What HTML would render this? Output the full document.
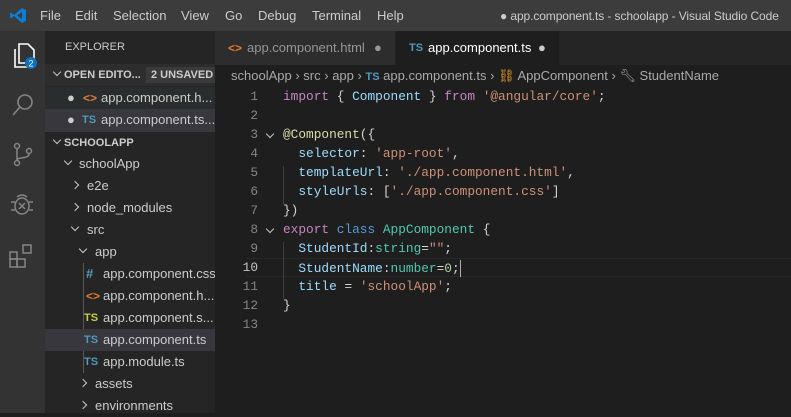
<!DOCTYPE html>
<html><head><style>
*{margin:0;padding:0;box-sizing:border-box}
body{width:791px;height:413px;overflow:hidden;background:#1e1e1e;font-family:"Liberation Sans",sans-serif;font-size:13px;color:#ccc;position:relative}
.abs{position:absolute}
#title{left:0;top:0;width:791px;height:31px;background:#3c3c3c}
.menu{top:8px;font-size:13px;color:#ccc;white-space:nowrap}
#act{left:0;top:31px;width:45px;height:382px;background:#333}
#side{left:45px;top:31px;width:170px;height:382px;background:#252526}
.row{position:absolute;left:0;width:170px;height:22px;line-height:22px;font-size:13px;color:#ccc;white-space:nowrap;overflow:hidden}
.hdr{font-size:11px;font-weight:bold;color:#ccc}
.chev{position:absolute;top:7px;width:6px;height:6px;border-left:1.3px solid #c5c5c5;border-bottom:1.3px solid #c5c5c5}
.down{transform:rotate(-45deg);top:5px}
.right{transform:rotate(-135deg)}
.ts{color:#519aba;font-weight:bold;font-size:11px}
.tsy{color:#cbcb41;font-weight:bold;font-size:11px}
.ht{color:#e37933;font-weight:bold;font-size:12px}
.ln{position:absolute;width:40px;text-align:right;left:218px;color:#858585;font-family:"Liberation Mono",monospace;font-size:12.8px}
.cl{position:absolute;left:283px;color:#d4d4d4;font-family:"Liberation Mono",monospace;font-size:12.8px;white-space:pre}
.k{color:#c586c0}.b{color:#569cd6}.v{color:#9cdcfe}.s{color:#ce9178}.t{color:#4ec9b0}.n{color:#b5cea8}
</style></head><body>
<div id="title" class="abs"></div>
<svg class="abs" style="left:10px;top:7px" width="17" height="17" viewBox="0 0 17 17"><path d="M12 1 L16 3 V14 L12 16 L4 9 L1 11.5 L0 10.5 V6.5 L1 5.5 L4 8 Z M12 5 L7 8.5 L12 12 Z" fill="#0a7ed4"/></svg>
<div class="abs menu" style="left:40px">File</div>
<div class="abs menu" style="left:75px">Edit</div>
<div class="abs menu" style="left:113px">Selection</div>
<div class="abs menu" style="left:181px">View</div>
<div class="abs menu" style="left:225px">Go</div>
<div class="abs menu" style="left:258px">Debug</div>
<div class="abs menu" style="left:312px">Terminal</div>
<div class="abs menu" style="left:377px">Help</div>
<div class="abs menu" style="left:500px;font-size:12px;top:9px;letter-spacing:-0.1px">● app.component.ts - schoolapp - Visual Studio Code</div>

<div id="act" class="abs"></div>
<svg class="abs" style="left:8px;top:40px" width="32" height="32" viewBox="0 0 32 32" fill="none" stroke="#fff" stroke-width="1.6"><path d="M11 4h9l6 6v13H11z M7 9v18h14"/><circle cx="23" cy="23" r="6" fill="#0e70c0" stroke="none"/><text x="23" y="26.5" font-size="9" fill="#fff" stroke="none" text-anchor="middle" font-family="Liberation Sans">2</text></svg>
<svg class="abs" style="left:10px;top:92px" width="26" height="26" viewBox="0 0 26 26" fill="none" stroke="#858585" stroke-width="1.6"><circle cx="15" cy="10" r="7"/><path d="M10 15 L3 23"/></svg>
<svg class="abs" style="left:10px;top:141px" width="24" height="28" viewBox="0 0 24 28" fill="none" stroke="#858585" stroke-width="1.5"><circle cx="7" cy="5" r="2.5"/><circle cx="7" cy="22" r="2.5"/><circle cx="19" cy="10" r="2.5"/><path d="M7 8v11M19 13c0 5-12 3-12 6"/></svg>
<svg class="abs" style="left:8px;top:190px" width="28" height="28" viewBox="0 0 28 28" fill="none" stroke="#858585" stroke-width="1.5"><ellipse cx="14" cy="16" rx="7" ry="8"/><path d="M9 7q5-4 10 0M3 12h4M21 12h4M3 20h4M21 20h4M11 13l6 6M17 13l-6 6"/></svg>
<svg class="abs" style="left:9px;top:243px" width="26" height="26" viewBox="0 0 26 26" fill="none" stroke="#858585" stroke-width="1.5"><rect x="1" y="9" width="7" height="7"/><rect x="1" y="16" width="7" height="8"/><rect x="8" y="16" width="8" height="8"/><rect x="14" y="2" width="8" height="8"/></svg>

<div id="side" class="abs">
<div class="row" style="top:5px;left:20px;font-size:11px">EXPLORER</div>
<div class="row hdr" style="top:33px;background:#2d2d2e"><span class="chev down" style="left:9px"></span><span style="position:absolute;left:19px">OPEN EDITO...</span><span style="position:absolute;left:101px;top:3px;height:16px;line-height:16px;padding:0 5px;background:#3a3a3a;color:#ccc">2 UNSAVED</span></div>
<div class="row" style="top:56px;background:#2a2d2e"><span style="position:absolute;left:22px;color:#ccc">●</span><span class="ht" style="position:absolute;left:38px">&lt;&gt;</span><span style="position:absolute;left:56px">app.component.h...</span></div>
<div class="row" style="top:78px;background:#37373d"><span style="position:absolute;left:22px;color:#ccc">●</span><span class="ts" style="position:absolute;left:37px">TS</span><span style="position:absolute;left:56px">app.component.ts...</span></div>
<div class="row hdr" style="top:100px;border-top:1px solid #3a3a3a"><span class="chev down" style="left:9px"></span><span style="position:absolute;left:19px">SCHOOLAPP</span></div>
<div class="row" style="top:122px"><span class="chev down" style="left:20px"></span><span style="position:absolute;left:34px">schoolApp</span></div>
<div class="row" style="top:144px"><span class="chev right" style="left:27px"></span><span style="position:absolute;left:42px">e2e</span></div>
<div class="row" style="top:166px"><span class="chev right" style="left:27px"></span><span style="position:absolute;left:42px">node_modules</span></div>
<div class="row" style="top:188px"><span class="chev down" style="left:27px"></span><span style="position:absolute;left:42px">src</span></div>
<div class="row" style="top:210px"><span class="chev down" style="left:35px"></span><span style="position:absolute;left:50px">app</span></div>
<div class="abs" style="left:38px;top:232px;width:1px;height:110px;background:#585858"></div>
<div class="row" style="top:232px"><span class="ts" style="position:absolute;left:41px;font-size:13px">#</span><span style="position:absolute;left:58px">app.component.css</span></div>
<div class="row" style="top:254px"><span class="ht" style="position:absolute;left:41px">&lt;&gt;</span><span style="position:absolute;left:58px">app.component.h...</span></div>
<div class="row" style="top:276px"><span class="tsy" style="position:absolute;left:39px">TS</span><span style="position:absolute;left:58px">app.component.s...</span></div>
<div class="row" style="top:298px;background:#37373d"><span class="ts" style="position:absolute;left:39px">TS</span><span style="position:absolute;left:58px">app.component.ts</span></div>
<div class="row" style="top:320px"><span class="ts" style="position:absolute;left:39px">TS</span><span style="position:absolute;left:58px">app.module.ts</span></div>
<div class="row" style="top:342px"><span class="chev right" style="left:35px"></span><span style="position:absolute;left:50px">assets</span></div>
<div class="row" style="top:364px"><span class="chev right" style="left:35px"></span><span style="position:absolute;left:50px">environments</span></div>
</div>

<div class="abs" style="left:215px;top:31px;width:576px;height:34px;background:#252526"></div>
<div class="abs" style="left:215px;top:31px;width:180px;height:34px;background:#2d2d2d;line-height:34px"><span class="ht" style="position:absolute;left:13px">&lt;&gt;</span><span style="position:absolute;left:32px;color:#969696">app.component.html</span><span style="position:absolute;left:159px;color:#969696">●</span></div>
<div class="abs" style="left:396px;top:31px;width:163px;height:34px;background:#1e1e1e;line-height:34px"><span class="ts" style="position:absolute;left:13px">TS</span><span style="position:absolute;left:32px;color:#fff">app.component.ts</span><span style="position:absolute;left:142px;color:#ccc">●</span></div>

<div class="abs" style="left:231px;top:68px;color:#a9a9a9;font-size:13px;white-space:nowrap">schoolApp <span>&#x203A;</span> src <span>&#x203A;</span> app <span>&#x203A;</span> <span class="ts">TS</span> app.component.ts <span>&#x203A;</span> <span style="color:#ee9d28">⛓</span> AppComponent <span>&#x203A;</span> 🔧︎ StudentName</div>

<div class="abs" style="left:246px;top:258px;width:545px;height:19px;border-top:1px solid #282828;border-bottom:1px solid #282828"></div>
<div class="abs" style="left:283px;top:166px;width:1px;height:38px;background:#404040"></div>
<div class="abs" style="left:283px;top:242px;width:1px;height:57px;background:#404040"></div>

<div class="ln" style="top:89px">1</div><div class="ln" style="top:108px">2</div><div class="ln" style="top:127px">3</div><div class="ln" style="top:146px">4</div><div class="ln" style="top:165px">5</div><div class="ln" style="top:184px">6</div><div class="ln" style="top:203px">7</div><div class="ln" style="top:222px">8</div><div class="ln" style="top:241px">9</div><div class="ln" style="top:260px;color:#c6c6c6">10</div><div class="ln" style="top:279px">11</div><div class="ln" style="top:298px">12</div><div class="ln" style="top:317px">13</div>
<span class="chev down abs" style="left:267px;top:131px"></span>
<span class="chev down abs" style="left:267px;top:226px"></span>

<div class="cl" style="top:89px"><span class="k">import</span> { <span class="v">Component</span> } <span class="k">from</span> <span class="s">'@angular/core'</span>;</div>
<div class="cl" style="top:127px"><span style="color:#dcdcaa">@Component</span><span>({</span></div>
<div class="cl" style="top:146px">  <span class="v">selector</span>: <span class="s">'app-root'</span>,</div>
<div class="cl" style="top:165px">  <span class="v">templateUrl</span>: <span class="s">'./app.component.html'</span>,</div>
<div class="cl" style="top:184px">  <span class="v">styleUrls</span>: [<span class="s">'./app.component.css'</span>]</div>
<div class="cl" style="top:203px">})</div>
<div class="cl" style="top:222px"><span class="k">export</span> <span class="b">class</span> <span class="t">AppComponent</span> {</div>
<div class="cl" style="top:241px">  <span class="v">StudentId</span>:<span class="t">string</span>=<span class="s">""</span>;</div>
<div class="cl" style="top:260px">  <span class="v">StudentName</span>:<span class="t">number</span>=<span class="n">0</span>;<span style="display:inline-block;width:1px;height:17px;background:#aeafad;vertical-align:middle"></span></div>
<div class="cl" style="top:279px">  <span class="v">title</span> = <span class="s">'schoolApp'</span>;</div>
<div class="cl" style="top:298px">}</div>
</body></html>
